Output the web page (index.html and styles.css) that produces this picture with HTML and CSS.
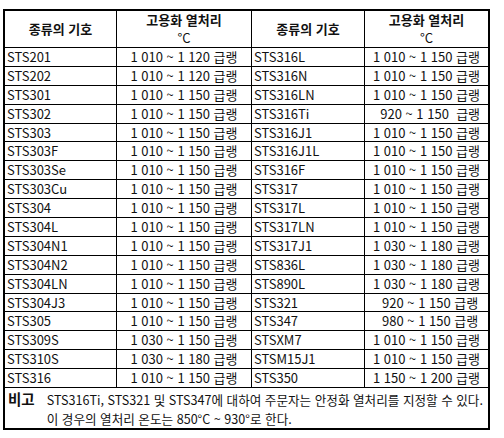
FILE: index.html
```html
<!DOCTYPE html>
<html lang="ko">
<head>
<meta charset="utf-8">
<link rel="stylesheet" href="styles.css">
</head>
<body>
<div class="sheet">
  <div class="grid">
    <div class="cell head">종류의 기호</div>
    <div class="cell head two"><span class="b">고용화 열처리</span><span class="unit">°C</span></div>
    <div class="cell head">종류의 기호</div>
    <div class="cell head two"><span class="b">고용화 열처리</span><span class="unit">°C</span></div>

    <div class="cell name">STS201</div><div class="cell val">1 010 ~ 1 120 급랭</div><div class="cell name">STS316L</div><div class="cell val">1 010 ~ 1 150 급랭</div>
    <div class="cell name">STS202</div><div class="cell val">1 010 ~ 1 120 급랭</div><div class="cell name">STS316N</div><div class="cell val">1 010 ~ 1 150 급랭</div>
    <div class="cell name">STS301</div><div class="cell val">1 010 ~ 1 150 급랭</div><div class="cell name">STS316LN</div><div class="cell val">1 010 ~ 1 150 급랭</div>
    <div class="cell name">STS302</div><div class="cell val">1 010 ~ 1 150 급랭</div><div class="cell name">STS316Ti</div><div class="cell val pre">  920 ~ 1 150  급랭</div>
    <div class="cell name">STS303</div><div class="cell val">1 010 ~ 1 150 급랭</div><div class="cell name">STS316J1</div><div class="cell val">1 010 ~ 1 150 급랭</div>
    <div class="cell name">STS303F</div><div class="cell val">1 010 ~ 1 150 급랭</div><div class="cell name">STS316J1L</div><div class="cell val">1 010 ~ 1 150 급랭</div>
    <div class="cell name">STS303Se</div><div class="cell val">1 010 ~ 1 150 급랭</div><div class="cell name">STS316F</div><div class="cell val">1 010 ~ 1 150 급랭</div>
    <div class="cell name">STS303Cu</div><div class="cell val">1 010 ~ 1 150 급랭</div><div class="cell name">STS317</div><div class="cell val">1 010 ~ 1 150 급랭</div>
    <div class="cell name">STS304</div><div class="cell val">1 010 ~ 1 150 급랭</div><div class="cell name">STS317L</div><div class="cell val">1 010 ~ 1 150 급랭</div>
    <div class="cell name">STS304L</div><div class="cell val">1 010 ~ 1 150 급랭</div><div class="cell name">STS317LN</div><div class="cell val">1 010 ~ 1 150 급랭</div>
    <div class="cell name">STS304N1</div><div class="cell val">1 010 ~ 1 150 급랭</div><div class="cell name">STS317J1</div><div class="cell val">1 030 ~ 1 180 급랭</div>
    <div class="cell name">STS304N2</div><div class="cell val">1 010 ~ 1 150 급랭</div><div class="cell name">STS836L</div><div class="cell val">1 030 ~ 1 180 급랭</div>
    <div class="cell name">STS304LN</div><div class="cell val">1 010 ~ 1 150 급랭</div><div class="cell name">STS890L</div><div class="cell val">1 030 ~ 1 180 급랭</div>
    <div class="cell name">STS304J3</div><div class="cell val">1 010 ~ 1 150 급랭</div><div class="cell name">STS321</div><div class="cell val pre">  920 ~ 1 150 급랭</div>
    <div class="cell name">STS305</div><div class="cell val">1 010 ~ 1 150 급랭</div><div class="cell name">STS347</div><div class="cell val pre">  980 ~ 1 150 급랭</div>
    <div class="cell name">STS309S</div><div class="cell val">1 030 ~ 1 150 급랭</div><div class="cell name">STSXM7</div><div class="cell val">1 010 ~ 1 150 급랭</div>
    <div class="cell name">STS310S</div><div class="cell val">1 030 ~ 1 180 급랭</div><div class="cell name">STSM15J1</div><div class="cell val">1 010 ~ 1 150 급랭</div>
    <div class="cell name">STS316</div><div class="cell val">1 010 ~ 1 150 급랭</div><div class="cell name">STS350</div><div class="cell val">1 150 ~ 1 200 급랭</div>

    <div class="cell note">
      <span class="note-label">비고</span>
      <div class="note-text">
        <p>STS316Ti, STS321 및 STS347에 대하여 주문자는 안정화 열처리를 지정할 수 있다.</p>
        <p>이 경우의 열처리 온도는 850°C ~ 930°로 한다.</p>
      </div>
    </div>
  </div>
</div>
</body>
</html>
```

FILE: styles.css
```css
html, body {
  margin: 0;
  padding: 0;
  background: #ffffff;
}

body {
  font-family: "Noto Sans CJK KR", "Noto Sans", sans-serif;
  font-size: 13px;
  color: #111111;
}

.sheet {
  padding: 9px 0 0 3px;
}

.grid {
  display: grid;
  grid-template-columns: 111px 134px 112px 123px;
  grid-template-rows: 36px repeat(18, 17.9px) 40px;
  gap: 1px;
  width: 483px;
  background: #000000;
  border: 2px solid #000000;
}

.cell {
  background: #ffffff;
  display: flex;
  align-items: center;
  line-height: 16px;
  white-space: nowrap;
  overflow: hidden;
}

.head {
  justify-content: center;
  font-weight: 700;
  font-size: 13px;
}

.head.two {
  flex-direction: column;
  justify-content: center;
  gap: 2px;
  line-height: 16px;
}

.unit {
  font-weight: 400;
  font-size: 13px;
}

.name {
  padding-left: 2px;
}

.val {
  justify-content: center;
}

.pre {
  white-space: pre;
}

.note {
  grid-column: 1 / -1;
  align-items: flex-start;
  padding: 2px 0 0 3px;
  gap: 12px;
}

.note-label {
  font-weight: 700;
  font-size: 14.5px;
  line-height: 18px;
}

.note-text {
  font-size: 12.6px;
}

.note-text p {
  margin: 0;
  line-height: 18px;
  padding-top: 1px;
}
```
